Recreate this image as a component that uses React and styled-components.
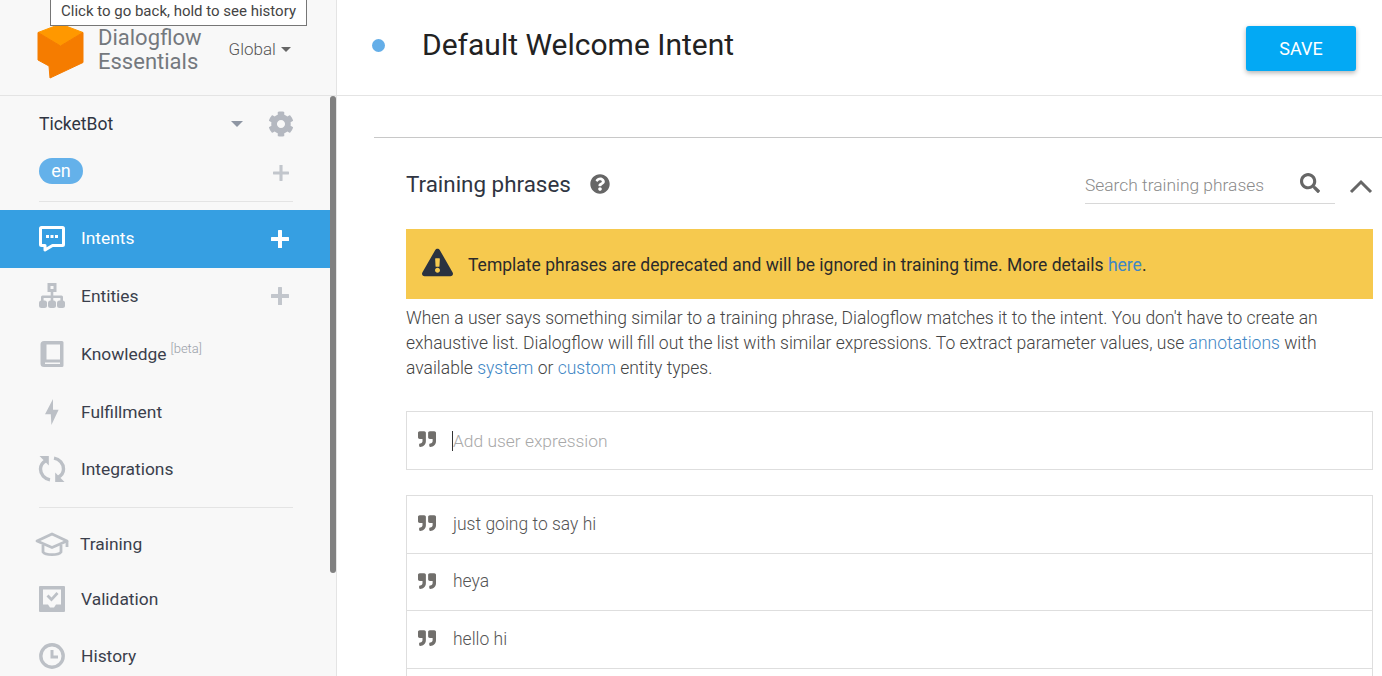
import React from "react";
import styled, { createGlobalStyle } from "styled-components";
import { FaCog, FaQuestionCircle, FaSearch, FaQuoteRight, FaExclamationTriangle } from "react-icons/fa";

const GlobalStyle = createGlobalStyle`
  html, body {
    margin: 0;
    padding: 0;
    height: 100%;
    overflow: hidden;
    background: #fff;
    font-family: Roboto, "Liberation Sans", sans-serif;
  }
`;

const navItems = [
  { label: "Intents", icon: "intents", active: true, plus: true },
  { label: "Entities", icon: "entities", plus: true },
  { label: "Knowledge", icon: "knowledge", beta: true },
  { label: "Fulfillment", icon: "fulfillment" },
  { label: "Integrations", icon: "integrations" },
];

const toolItems = [
  { label: "Training", icon: "training", height: 55 },
  { label: "Validation", icon: "validation", height: 55 },
  { label: "History", icon: "history", height: 58 },
];

const phrases = ["just going to say hi", "heya", "hello hi"];

const NavIcon = ({ name }) => {
  switch (name) {
    case "intents":
      return (
        <svg width="28" height="28" viewBox="0 0 28 28" fill="none">
          <path d="M3.500 2.500h21a1 1 0 0 1 1 1v16a1 1 0 0 1-1 1H14.500l-7.500 4.500v-4.500H3.500a1 1 0 0 1-1-1v-16a1 1 0 0 1 1-1z" stroke="currentColor" strokeWidth="3" strokeLinejoin="round" />
          <rect x="8" y="10" width="3" height="3" fill="currentColor" />
          <rect x="12.500" y="10" width="3" height="3" fill="currentColor" />
          <rect x="17" y="10" width="3" height="3" fill="currentColor" />
        </svg>
      );
    case "entities":
      return (
        <svg width="28" height="28" viewBox="0 0 28 28" fill="currentColor">
          <path fillRule="evenodd" d="M9.500 1h9v9h-3.200v3.500h8.200a1.500 1.500 0 0 1 1.500 1.500v5h-2.600v-3.900h-7.100v3.900h-2.600v-3.900H5.600v3.900H3v-5a1.500 1.500 0 0 1 1.500-1.500h8.200V10H9.500zm3 3v3h3V4z" />
          <rect x="1" y="18.500" width="8" height="7.500" rx="2.500" />
          <rect x="10" y="18.500" width="8" height="7.500" rx="2.500" />
          <rect x="19" y="18.500" width="8" height="7.500" rx="2.500" />
        </svg>
      );
    case "knowledge":
      return (
        <svg width="28" height="28" viewBox="0 0 28 28" fill="currentColor">
          <path fillRule="evenodd" d="M6 1h18a1.500 1.500 0 0 1 1.500 1.500v23A1.500 1.500 0 0 1 24 27H6a3.500 3.500 0 0 1-3.500-3.500v-19A3.500 3.500 0 0 1 6 1zm2.500 3.500v15h13.500v-15zM7 22.500v1.500h15v-1.500z" />
        </svg>
      );
    case "fulfillment":
      return (
        <svg width="14" height="26" viewBox="0 0 14 26" fill="currentColor">
          <path d="M8 0 0 15.200h5.800L6.400 26 13.600 10.800H8z" />
        </svg>
      );
    case "integrations":
      return (
        <svg width="28" height="28" viewBox="0 0 28 28" fill="none" stroke="currentColor" strokeWidth="3.400">
          <path d="M8 5.500C4.500 7.500 2.500 10.500 2.500 14c0 5.500 4 9.800 9.500 10.800" />
          <path d="M20 22.500c3.500-2 5.500-5 5.500-8.500 0-5.500-4-9.800-9.500-10.800" />
          <path d="M1.500 1h9.300v9.500z" fill="currentColor" stroke="none" />
          <path d="M26.500 27h-9.300v-9.500z" fill="currentColor" stroke="none" />
        </svg>
      );
    case "training":
      return (
        <svg width="34" height="25" viewBox="0 0 34 25" fill="none" stroke="currentColor" strokeWidth="2.800" strokeLinejoin="round">
          <path d="M2 9 17 2l15 7-15 6.500z" />
          <path d="M8 13v7c2.500 3.500 15.500 3.500 18 0v-7" />
          <path d="M32 9v6" />
        </svg>
      );
    case "validation":
      return (
        <svg width="28" height="28" viewBox="0 0 28 28" fill="currentColor">
          <path fillRule="evenodd" d="M2 1h24a1 1 0 0 1 1 1v24a1 1 0 0 1-1 1H2a1 1 0 0 1-1-1V2a1 1 0 0 1 1-1zm3 3.500v15h5l2 3h4l2-3h5v-15z" />
          <path d="M8.500 11.500l2-2 3 3 5-5.500 2 2-7 7.500z" />
        </svg>
      );
    case "history":
      return (
        <svg width="28" height="28" viewBox="0 0 28 28" fill="none" stroke="currentColor">
          <circle cx="14" cy="14" r="11.200" strokeWidth="3.400" />
          <path d="M14 8v7h6" strokeWidth="3" />
        </svg>
      );
    default:
      return null;
  }
};

const PlusGlyph = ({ size = 18, weight = 4 }) => (
  <svg width={size} height={size} viewBox="0 0 18 18" fill="currentColor">
    <rect x={9 - weight / 2} y="0" width={weight} height="18" rx="0.500" />
    <rect x="0" y={9 - weight / 2} width="18" height={weight} rx="0.500" />
  </svg>
);

const App = () => {
  return (
    <Page>
      <GlobalStyle />
      <Tooltip>Click to go back, hold to see history</Tooltip>
      <Sidebar>
        <Brand>
          <Logo width="48" height="56" viewBox="0 0 48 56">
            <path d="M23.500 0 46 8.500 23.500 22 1 8.500z" fill="#ff9800" stroke="#ff9800" strokeLinejoin="round" />
            <path d="M1 8.500 23.500 22 46 8.500V38.500L13 54 12 42 1 36z" fill="#f57c00" stroke="#f57c00" strokeLinejoin="round" />
          </Logo>
          <BrandName>
            <span>Dialogflow</span>
            <span>Essentials</span>
          </BrandName>
          <Region>
            Global <Caret />
          </Region>
        </Brand>
        <Scroller>
          <AgentRow>
            <AgentName>TicketBot</AgentName>
            <Caret $big />
            <GearWrap>
              <FaCog size={26} />
            </GearWrap>
          </AgentRow>
          <LangRow>
            <LangPill>en</LangPill>
            <MutedPlus>
              <PlusGlyph size={16} weight={3.500} />
            </MutedPlus>
          </LangRow>
          <Divider />
          <NavList>
            {navItems.map((item) => (
              <NavRow key={item.label} $active={item.active}>
                <IconSlot $active={item.active}>
                  <NavIcon name={item.icon} />
                </IconSlot>
                <NavLabel $active={item.active}>
                  {item.label}
                  {item.beta && <Beta>[beta]</Beta>}
                </NavLabel>
                {item.plus && (
                  <RowPlus $active={item.active}>
                    <PlusGlyph />
                  </RowPlus>
                )}
              </NavRow>
            ))}
          </NavList>
          <Divider />
          <ToolList>
            {toolItems.map((item) => (
              <ToolRow key={item.label} $height={item.height}>
                <IconSlot $wide={item.icon === "training"}>
                  <NavIcon name={item.icon} />
                </IconSlot>
                <NavLabel>{item.label}</NavLabel>
              </ToolRow>
            ))}
          </ToolList>
          <ScrollThumb />
        </Scroller>
      </Sidebar>
      <Main>
        <TopBar>
          <StatusDot />
          <IntentTitle>Default Welcome Intent</IntentTitle>
          <SaveButton>SAVE</SaveButton>
        </TopBar>
        <Content>
          <Rule />
          <Section>
            <SectionHead>
              <SectionTitle>Training phrases</SectionTitle>
              <HelpIcon>
                <FaQuestionCircle size={20} />
              </HelpIcon>
              <SearchBox>
                <SearchHint>Search training phrases</SearchHint>
                <SearchGlyph size={20} />
              </SearchBox>
              <Chevron width="24" height="16" viewBox="0 0 24 16" fill="none" stroke="#666" strokeWidth="3">
                <path d="M2 14 12 4l10 10" />
              </Chevron>
            </SectionHead>
            <Banner>
              <WarnGlyph size={31} />
              <BannerText>
                Template phrases are deprecated and will be ignored in training time. More details <Link>here</Link>.
              </BannerText>
            </Banner>
            <Description>
              When a user says something similar to a training phrase, Dialogflow matches it to the intent. You don't have to create an
              exhaustive list. Dialogflow will fill out the list with similar expressions. To extract parameter values, use{" "}
              <Link>annotations</Link> with available <Link>system</Link> or <Link>custom</Link> entity types.
            </Description>
            <InputBox>
              <QuoteIcon size={18} />
              <Caretline />
              <Placeholder>Add user expression</Placeholder>
            </InputBox>
            <PhraseList>
              {phrases.map((phrase, i) => (
                <PhraseRow key={phrase} $first={i === 0}>
                  <QuoteIcon size={18} />
                  <PhraseText>{phrase}</PhraseText>
                </PhraseRow>
              ))}
              <PhraseRow />
            </PhraseList>
          </Section>
        </Content>
      </Main>
    </Page>
  );
};

const Page = styled.div`
  position: relative;
  display: flex;
  width: 1382px;
  height: 676px;
  overflow: hidden;
  background: #fff;
`;

const Tooltip = styled.div`
  position: absolute;
  top: -1px;
  left: 50px;
  z-index: 5;
  width: 257px;
  height: 27px;
  box-sizing: border-box;
  border: 1px solid #767676;
  background: #fff;
  color: #444;
  font-size: 15px;
  line-height: 23px;
  text-align: center;
  white-space: nowrap;
`;

const Sidebar = styled.aside`
  flex: 0 0 336px;
  display: flex;
  flex-direction: column;
  background: #f8f8f8;
  border-right: 1px solid #e4e4e4;
`;

const Brand = styled.div`
  flex: 0 0 96px;
  box-sizing: border-box;
  display: flex;
  align-items: center;
  padding-left: 37px;
  border-bottom: 1px solid #e4e4e4;
`;

const Logo = styled.svg`
  flex: 0 0 48px;
  margin-top: 9px;
`;

const BrandName = styled.div`
  display: flex;
  flex-direction: column;
  margin-left: 13px;
  margin-top: 5px;
  color: #74787e;
  font-size: 22px;
  line-height: 24.500px;
`;

const Region = styled.div`
  display: flex;
  align-items: center;
  gap: 5px;
  margin: 3px 0 0 27px;
  color: #555;
  font-size: 17px;
  font-weight: 300;
`;

const Caret = styled.i`
  display: inline-block;
  width: 0;
  height: 0;
  border-left: ${(p) => (p.$big ? 6 : 5)}px solid transparent;
  border-right: ${(p) => (p.$big ? 6 : 5)}px solid transparent;
  border-top: ${(p) => (p.$big ? 6 : 5)}px solid ${(p) => (p.$big ? "#8e96a3" : "#666")};
`;

const Scroller = styled.div`
  position: relative;
  flex: 1;
  min-height: 0;
  overflow: hidden;
`;

const AgentRow = styled.div`
  display: flex;
  align-items: center;
  height: 55px;
  padding: 0 42px 0 39px;
`;

const AgentName = styled.div`
  flex: 1;
  color: #2f3542;
  font-size: 17.500px;
`;

const GearWrap = styled.span`
  display: flex;
  margin-left: 25px;
  color: #b4b8c0;
`;

const LangRow = styled.div`
  display: flex;
  align-items: center;
  justify-content: space-between;
  height: 41px;
  padding: 0 47px 0 39px;
`;

const LangPill = styled.span`
  width: 44px;
  height: 26px;
  margin-top: -2px;
  border-radius: 13px;
  background: #64b1ea;
  color: #fff;
  font-size: 18px;
  line-height: 26px;
  text-align: center;
`;

const MutedPlus = styled.span`
  display: flex;
  margin-top: 2px;
  color: #c2c6cc;
`;

const Divider = styled.div`
  height: 1px;
  margin: 9px 43px 8px 39px;
  background: #e4e4e4;
`;

const NavList = styled.div`
  display: flex;
  flex-direction: column;
`;

const NavRow = styled.div`
  display: flex;
  align-items: center;
  height: 57.600px;
  padding: 0 41px 0 38px;
  margin-right: 6px;
  background: ${(p) => (p.$active ? "#369fe2" : "transparent")};
`;

const ToolList = styled.div`
  display: flex;
  flex-direction: column;
  margin-top: 9px;
`;

const ToolRow = styled.div`
  display: flex;
  align-items: center;
  height: ${(p) => p.$height}px;
  padding-left: 38px;
`;

const IconSlot = styled.span`
  flex: 0 0 28px;
  width: 28px;
  display: flex;
  justify-content: center;
  margin-right: ${(p) => (p.$wide ? "14px" : "15px")};
  color: ${(p) => (p.$active ? "#fff" : "#bcc0c6")};

  svg {
    flex-shrink: 0;
  }
`;

const NavLabel = styled.span`
  flex: 1;
  margin-top: ${(p) => (p.$active ? "-2px" : "0")};
  color: ${(p) => (p.$active ? "#fff" : "#3b3f4c")};
  font-size: 17.400px;
  white-space: nowrap;
`;

const Beta = styled.sup`
  margin-left: 4px;
  color: #9aa0a8;
  font-size: 13px;
  font-weight: 300;
  line-height: 0;
`;

const RowPlus = styled.span`
  display: flex;
  color: ${(p) => (p.$active ? "#fff" : "#c2c6cc")};
`;

const ScrollThumb = styled.div`
  position: absolute;
  top: 0;
  right: 0;
  width: 6px;
  height: 477px;
  border-radius: 3px;
  background: #808080;
`;

const Main = styled.main`
  flex: 1;
  min-width: 0;
  display: flex;
  flex-direction: column;
`;

const TopBar = styled.header`
  flex: 0 0 96px;
  box-sizing: border-box;
  display: flex;
  align-items: center;
  padding: 2px 26px 0 35px;
  border-bottom: 1px solid #e4e4e4;
`;

const StatusDot = styled.span`
  width: 13px;
  height: 13px;
  margin-top: -6px;
  border-radius: 50%;
  background: #64aee8;
`;

const IntentTitle = styled.h1`
  flex: 1;
  margin: -9px 0 0 37px;
  color: #222;
  font-size: 30px;
  font-weight: 400;
`;

const SaveButton = styled.button`
  width: 110px;
  height: 45px;
  border: 0;
  border-radius: 3px;
  background: #03a9f4;
  box-shadow: 0 2px 5px rgba(0, 0, 0, 0.3);
  color: #fff;
  font-family: inherit;
  font-size: 18px;
  font-weight: 400;
`;

const Content = styled.div`
  flex: 1;
  padding: 41px 0 0 37px;
`;

const Rule = styled.hr`
  margin: 0;
  border: 0;
  border-top: 1px solid #c8c8c8;
`;

const Section = styled.section`
  padding: 0 9px 0 32px;
`;

const SectionHead = styled.div`
  display: flex;
  align-items: center;
  height: 91px;
`;

const SectionTitle = styled.h2`
  margin: 0;
  color: #2f3542;
  font-size: 22.400px;
  font-weight: 400;
`;

const HelpIcon = styled.span`
  display: flex;
  margin-left: 19px;
  color: #666;
`;

const SearchBox = styled.div`
  display: flex;
  align-items: center;
  justify-content: space-between;
  box-sizing: border-box;
  width: 250px;
  height: 36px;
  margin: 4px 0 0 auto;
  padding-right: 15px;
  border-bottom: 1px solid #d8d8d8;
`;

const SearchHint = styled.span`
  color: #8a8a8a;
  font-size: 17.400px;
  font-weight: 300;
`;

const SearchGlyph = styled(FaSearch)`
  margin-top: -4px;
  color: #666;
`;

const Chevron = styled.svg`
  margin: 5px 0 0 14px;
`;

const Banner = styled.div`
  display: flex;
  align-items: center;
  height: 70px;
  padding-left: 16px;
  background: #f6c94e;
`;

const WarnGlyph = styled(FaExclamationTriangle)`
  margin-top: -3px;
  color: #2a3240;
`;

const BannerText = styled.div`
  margin: 2px 0 0 15px;
  color: #2b2b2b;
  font-size: 17.500px;
`;

const Link = styled.a`
  color: #3f87c5;
`;

const Description = styled.p`
  margin: 7px 0 30px;
  color: #444;
  font-size: 17.500px;
  font-weight: 300;
  line-height: 25px;
`;

const InputBox = styled.div`
  display: flex;
  align-items: center;
  box-sizing: border-box;
  height: 59px;
  padding: 0 11px;
  border: 1px solid #dedede;
`;

const QuoteIcon = styled(FaQuoteRight)`
  flex: 0 0 18px;
  margin-top: -3px;
  color: #716f6c;
`;

const Caretline = styled.span`
  width: 1px;
  height: 20px;
  margin-left: 16px;
  background: #333;
`;

const Placeholder = styled.span`
  color: #a8a8a8;
  font-size: 17.400px;
  font-weight: 300;
`;

const PhraseList = styled.div`
  margin-top: 25px;
  border: 1px solid #dedede;
`;

const PhraseRow = styled.div`
  display: flex;
  align-items: center;
  box-sizing: border-box;
  height: ${(p) => (p.$first ? "57px" : "57.400px")};
  padding: 0 11px;
  border-top: ${(p) => (p.$first ? "0" : "1px solid #dedede")};
`;

const PhraseText = styled.span`
  margin: -2px 0 0 17px;
  color: #555;
  font-size: 17.500px;
  font-weight: 300;
`;

export default App;
